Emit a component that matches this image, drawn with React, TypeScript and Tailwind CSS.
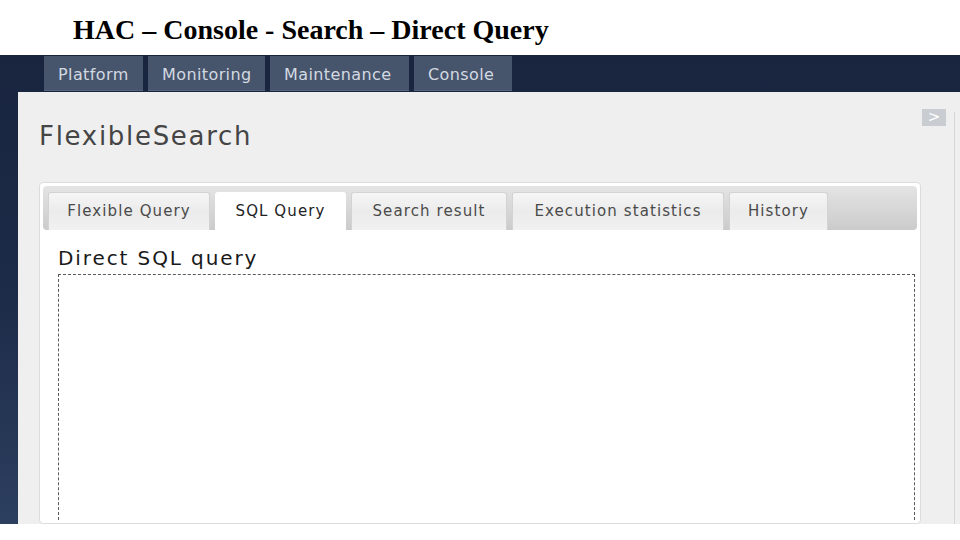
import React from 'react';

const navTabs = [
  { label: 'Platform', width: 'w-[99px]' },
  { label: 'Monitoring', width: 'w-[117px]' },
  { label: 'Maintenance', width: 'w-[139px]' },
  { label: 'Console', width: 'w-[98px]' },
];

const searchTabs = [
  { label: 'Flexible Query', width: 'w-[162px]' },
  { label: 'SQL Query', width: 'w-[131px]', active: true },
  { label: 'Search result', width: 'w-[156px]' },
  { label: 'Execution statistics', width: 'w-[212px]' },
  { label: 'History', width: 'w-[99px]' },
];

export default function App() {
  return (
    <div className="w-[960px] h-[540px] bg-white flex flex-col overflow-hidden">
      {/* slide title */}
      <div className="h-[55px] shrink-0 pl-[73px] pt-[14px]">
        <h1
          className="text-[28px] leading-[32px] font-bold text-black"
          style={{ fontFamily: '"Liberation Serif", "Times New Roman", serif' }}
        >
          HAC – Console - Search – Direct Query
        </h1>
      </div>

      {/* screenshot of the console */}
      <div
        className="h-[469px] shrink-0 flex flex-col bg-gradient-to-b from-[#19253f] via-[#1c2b48] to-[#2d3f5f]"
        style={{ fontFamily: '"DejaVu Sans", Verdana, sans-serif' }}
      >
        <nav className="h-[37px] shrink-0 flex items-start gap-[5px] pl-[44px] pt-[1px]">
          {navTabs.map((t) => (
            <div
              key={t.label}
              className={`${t.width} h-[35px] pl-[14px] pt-[4px] flex items-center bg-[#47556c] border-b border-[#56657c] text-[16px] tracking-[0.4px] text-[#d3d9e1]`}
            >
              {t.label}
            </div>
          ))}
        </nav>

        <div className="flex-1 ml-[18px] bg-[#efefef] flex min-h-0">
          <main className="w-[903px] shrink-0 pl-[21px] flex flex-col min-h-0">
            <h2 className="mt-[28px] h-[62px] text-[26px] leading-[32px] tracking-[1.7px] text-[#454545]">
              FlexibleSearch
            </h2>

            <div className="flex-1 w-[882px] bg-white border border-[#dcdcdc] rounded-[4px] p-[3px] flex flex-col min-h-0">
              <div className="h-[44px] shrink-0 rounded-[4px] bg-gradient-to-b from-[#e4e4e4] to-[#cbcbcb] flex items-end gap-[5px] pl-[5px]">
                {searchTabs.map((t) =>
                  t.active ? (
                    <div
                      key={t.label}
                      className={`${t.width} h-[38px] rounded-t-[3px] bg-white flex items-center justify-center text-[15px] tracking-[1.1px] text-[#222]`}
                    >
                      {t.label}
                    </div>
                  ) : (
                    <div
                      key={t.label}
                      className={`${t.width} h-[38px] rounded-t-[3px] border border-b-0 border-[#d3d3d3] bg-gradient-to-b from-[#f6f6f6] via-[#ebebeb] to-[#f1f1f1] flex items-center justify-center text-[15px] tracking-[1.1px] text-[#4a4a4a]`}
                    >
                      {t.label}
                    </div>
                  )
                )}
              </div>

              <div className="flex-1 px-[15px] pt-[16px] flex flex-col min-h-0">
                <h3 className="h-[28px] text-[20px] leading-[24px] tracking-[1.9px] text-[#1a1a1a]">
                  Direct SQL query
                </h3>
                <div className="flex-1 w-[857px] border border-dashed border-[#5a5a5a] border-b-0" />
              </div>
            </div>
          </main>

          <div className="w-[33px] shrink-0 pt-[17px] pl-[1px]">
            <button className="w-[24px] h-[17px] bg-[#c9ccd1] text-white text-[15px] leading-[17px] flex items-center justify-center">
              &gt;
            </button>
          </div>
          <div className="w-[1px] mt-[20px] bg-[#d6d6d6]" />
          <div className="flex-1" />
        </div>
      </div>

      <div className="flex-1 bg-white" />
    </div>
  );
}
